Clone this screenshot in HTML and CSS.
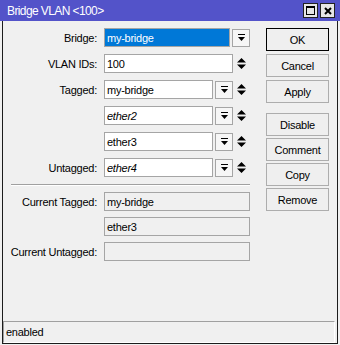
FILE: index.html
```html
<!DOCTYPE html>
<html lang="en">
<head>
    <meta charset="UTF-8">
    <meta name="viewport" content="width=device-width, initial-scale=1.0">
    <title>Bridge VLAN</title>
    <link rel="stylesheet" href="styles.css">
</head>
<body>
    <div class="window">
        <div class="titlebar">
            <span class="title">Bridge VLAN &lt;100&gt;</span>
            <div class="title-btns">
                <span class="tbtn">
                    <svg width="9" height="9" viewBox="0 0 9 9"><path d="M0 0h9v9H0zM1 2v6h7V2z" fill="#000" fill-rule="evenodd"/></svg>
                </span>
                <span class="tbtn">
                    <svg width="8" height="8" viewBox="0 0 8 8"><path d="M1 1l6 6M7 1L1 7" stroke="#000" stroke-width="2"/></svg>
                </span>
            </div>
        </div>
        <div class="frame">
            <div class="content">
                <div class="form">
                    <div class="row">
                        <span class="label">Bridge:</span>
                        <div class="field">
                            <div class="input sel">my-bridge</div>
                            <span class="drop"><svg width="7" height="7" viewBox="0 0 7 7"><path d="M0 0h7v1H0zM0 3h7L3.5 7z" fill="#000"/></svg></span>
                        </div>
                    </div>
                    <div class="row">
                        <span class="label">VLAN IDs:</span>
                        <div class="field">
                            <div class="input">100</div>
                            <span class="spin"><svg width="9" height="11" viewBox="0 0 9 11"><path d="M4.5 0L9 4.5H0zM0 6.5h9L4.5 11z" fill="#000"/></svg></span>
                        </div>
                    </div>
                    <div class="row">
                        <span class="label">Tagged:</span>
                        <div class="field">
                            <div class="input">my-bridge</div>
                            <span class="drop"><svg width="7" height="7" viewBox="0 0 7 7"><path d="M0 0h7v1H0zM0 3h7L3.5 7z" fill="#000"/></svg></span>
                            <span class="spin"><svg width="9" height="11" viewBox="0 0 9 11"><path d="M4.5 0L9 4.5H0zM0 6.5h9L4.5 11z" fill="#000"/></svg></span>
                        </div>
                    </div>
                    <div class="row">
                        <span class="label"></span>
                        <div class="field">
                            <div class="input it">ether2</div>
                            <span class="drop"><svg width="7" height="7" viewBox="0 0 7 7"><path d="M0 0h7v1H0zM0 3h7L3.5 7z" fill="#000"/></svg></span>
                            <span class="spin"><svg width="9" height="11" viewBox="0 0 9 11"><path d="M4.5 0L9 4.5H0zM0 6.5h9L4.5 11z" fill="#000"/></svg></span>
                        </div>
                    </div>
                    <div class="row">
                        <span class="label"></span>
                        <div class="field">
                            <div class="input">ether3</div>
                            <span class="drop"><svg width="7" height="7" viewBox="0 0 7 7"><path d="M0 0h7v1H0zM0 3h7L3.5 7z" fill="#000"/></svg></span>
                            <span class="spin"><svg width="9" height="11" viewBox="0 0 9 11"><path d="M4.5 0L9 4.5H0zM0 6.5h9L4.5 11z" fill="#000"/></svg></span>
                        </div>
                    </div>
                    <div class="row">
                        <span class="label">Untagged:</span>
                        <div class="field">
                            <div class="input it">ether4</div>
                            <span class="drop"><svg width="7" height="7" viewBox="0 0 7 7"><path d="M0 0h7v1H0zM0 3h7L3.5 7z" fill="#000"/></svg></span>
                            <span class="spin"><svg width="9" height="11" viewBox="0 0 9 11"><path d="M4.5 0L9 4.5H0zM0 6.5h9L4.5 11z" fill="#000"/></svg></span>
                        </div>
                    </div>

                    <div class="sep"></div>

                    <div class="row ro">
                        <span class="label">Current Tagged:</span>
                        <div class="field"><div class="input">my-bridge</div></div>
                    </div>
                    <div class="row ro">
                        <span class="label"></span>
                        <div class="field"><div class="input">ether3</div></div>
                    </div>
                    <div class="row ro">
                        <span class="label">Current Untagged:</span>
                        <div class="field"><div class="input"></div></div>
                    </div>
                </div>

                <div class="buttons">
                    <div class="btn def">OK</div>
                    <div class="btn">Cancel</div>
                    <div class="btn last">Apply</div>
                    <div class="btn tight">Disable</div>
                    <div class="btn tight">Comment</div>
                    <div class="btn tight">Copy</div>
                    <div class="btn tight">Remove</div>
                </div>
            </div>
            <div class="status">enabled</div>
        </div>
    </div>
</body>
</html>
```

FILE: styles.css
```css
*{
    margin: 0;
    padding: 0;
    box-sizing: border-box;
}
body{
    font-family: "Liberation Sans", Arial, sans-serif;
    font-size: 11px;
    letter-spacing: -0.25px;
    color: #000;
    background-color: #f0f0f0;
    width: 340px;
    height: 345px;
    overflow: hidden;
}

.window{
    width: 340px;
    height: 345px;
    display: flex;
    flex-direction: column;
    background-color: #f0f0f0;
}

.titlebar{
    height: 21px;
    background-color: #5353c9;
    color: white;
    display: flex;
    align-items: center;
    justify-content: space-between;
    padding: 0 5px 0 7px;
}
.title{
    font-size: 12px;
    letter-spacing: -0.6px;
}
.title-btns{
    display: flex;
    gap: 2px;
}
.tbtn{
    width: 15px;
    height: 15px;
    background-color: #e6e6e6;
    border: 1px solid #222;
    display: flex;
    align-items: center;
    justify-content: center;
}

.frame{
    flex: 1;
    margin: 0 2px 1px;
    border: 1px solid #1c1c1c;
    border-top: none;
    display: flex;
    flex-direction: column;
}
.content{
    flex: 1;
    display: flex;
    padding-top: 7px;
}

.form{
    width: 247px;
}
.row{
    display: flex;
    align-items: center;
    height: 19px;
    margin-bottom: 7px;
}
.row.ro{
    margin-bottom: 6px;
}
.label{
    width: 94px;
    margin-right: 7px;
    text-align: right;
    white-space: nowrap;
}
.field{
    width: 146px;
    height: 19px;
    display: flex;
    align-items: center;
}
.input{
    flex: 1;
    min-width: 0;
    height: 19px;
    background-color: white;
    border: 1px solid #a5a5a5;
    padding-left: 2px;
    display: flex;
    align-items: center;
    white-space: nowrap;
    overflow: hidden;
}
.input.sel{
    background-color: #0078d7;
    color: white;
}
.input.it{
    font-style: italic;
}
.ro .input{
    background-color: #f0f0f0;
}
.drop{
    width: 18px;
    height: 18px;
    margin-left: 2px;
    border: 1px solid #a5a5a5;
    background-color: #f6f6f6;
    display: flex;
    align-items: center;
    justify-content: center;
}
.spin{
    width: 17px;
    display: flex;
    align-items: center;
    justify-content: center;
}

.sep{
    height: 2px;
    margin: 2px 0 6px 8px;
    border-top: 1px solid #a0a0a0;
    border-bottom: 1px solid white;
}

.buttons{
    width: 63px;
    margin-left: 16px;
}
.btn{
    height: 23px;
    margin-bottom: 3px;
    border: 1px solid #adadad;
    background-color: #efefef;
    display: flex;
    align-items: center;
    justify-content: center;
}
.btn.def{
    border-color: #000;
}
.btn.last{
    margin-bottom: 10px;
}
.btn.tight{
    margin-bottom: 2px;
}

.status{
    height: 22px;
    margin-right: 2px;
    border-top: 1px solid #a0a0a0;
    border-left: 1px solid #a0a0a0;
    border-right: 1px solid white;
    border-bottom: 1px solid white;
    padding-left: 2px;
    display: flex;
    align-items: center;
}
```
